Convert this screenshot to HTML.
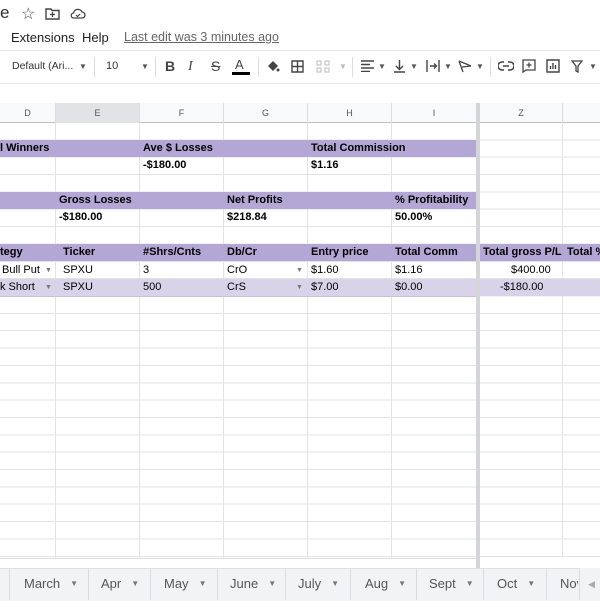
<!DOCTYPE html><html><head><style>
body{margin:0;width:600px;height:600px;overflow:hidden;background:#fff;font-family:"Liberation Sans",Arial,sans-serif;position:relative}
.a{position:absolute}
.t{position:absolute;font-size:11px;color:#000;white-space:nowrap;line-height:17px}
.b{font-weight:bold}
.ic{position:absolute;color:#444;font-size:14px}
.hd{position:absolute;top:103px;height:20px;font-size:9px;color:#555;text-align:center;line-height:20px;border-right:1px solid #dadce0}
.tab{position:absolute;top:576px;font-size:13px;color:#555;white-space:nowrap}
.tab i{font-style:normal;font-size:8px;color:#777;margin-left:10px;vertical-align:2px}
.sep{position:absolute;top:568px;height:32px;width:1px;background:#dadce0}
</style></head><body>
<div class="t" style="left:0;top:4px;font-size:17px;color:#333">e</div>
<div class="ic" style="left:21px;top:4px;font-size:16px">☆</div>
<svg class="a" style="left:45px;top:7px" width="15" height="13"><path d="M1 2h5l1 1.5h7v8.5H1z" fill="none" stroke="#444" stroke-width="1.4"/><path d="M7.5 5v5M5 7.5h5" stroke="#444" stroke-width="1.3"/></svg>
<svg class="a" style="left:70px;top:8px" width="16" height="11"><path d="M4 10h8a3 3 0 0 0 0-6 4.5 4.5 0 0 0-8.5 1A2.5 2.5 0 0 0 4 10z" fill="none" stroke="#444" stroke-width="1.3"/><path d="M6 7l1.5 1.5L10 6" fill="none" stroke="#444" stroke-width="1.2"/></svg>
<div class="t" style="left:11px;top:29px;font-size:13px;color:#222">Extensions</div>
<div class="t" style="left:82px;top:29px;font-size:13px;color:#222">Help</div>
<div class="t" style="left:124px;top:29px;font-size:12.5px;color:#666;text-decoration:underline">Last edit was 3 minutes ago</div>
<div class="a" style="left:0;top:50px;width:600px;height:1px;background:#e8eaed"></div>
<div class="a" style="left:0;top:83px;width:600px;height:1px;background:#e8eaed"></div>
<div class="t" style="left:12px;top:58px;font-size:10.5px;color:#333">Default (Ari...</div>
<div class="t" style="left:79px;top:58px;font-size:8px;color:#555">▼</div>
<div class="a" style="left:94px;top:57px;width:1px;height:20px;background:#dadce0"></div>
<div class="t" style="left:106px;top:58px;font-size:11px;color:#333">10</div>
<div class="t" style="left:141px;top:58px;font-size:8px;color:#555">▼</div>
<div class="a" style="left:155px;top:57px;width:1px;height:20px;background:#dadce0"></div>
<div class="t b" style="left:165px;top:58px;font-size:14px;color:#444">B</div>
<div class="t" style="left:188px;top:58px;font-size:14px;color:#444;font-style:italic;font-family:'Liberation Serif'">I</div>
<div class="t" style="left:211px;top:58px;font-size:14px;color:#444;text-decoration:line-through">S</div>
<div class="t" style="left:235px;top:56px;font-size:13px;color:#444">A</div>
<div class="a" style="left:232px;top:72px;width:18px;height:3px;background:#000"></div>
<div class="a" style="left:258px;top:57px;width:1px;height:20px;background:#dadce0"></div>
<svg class="a" style="left:266px;top:59px" width="14" height="14"><path d="M2 7l5-5 5 5-5 5z" fill="#444"/><circle cx="12" cy="11" r="1.5" fill="#444"/></svg>
<svg class="a" style="left:291px;top:60px" width="13" height="13"><path d="M1 1h11v11H1zM6.5 1v11M1 6.5h11" fill="none" stroke="#444" stroke-width="1.4"/></svg>
<svg class="a" style="left:316px;top:60px" width="14" height="13"><path d="M1 1h4v4H1zM9 1h4v4H9zM1 8h4v4H1zM9 8h4v4H9z" fill="none" stroke="#bbb" stroke-width="1"/></svg>
<div class="t" style="left:339px;top:58px;font-size:8px;color:#bbb">▼</div>
<div class="a" style="left:352px;top:57px;width:1px;height:20px;background:#dadce0"></div>
<svg class="a" style="left:361px;top:60px" width="13" height="12"><path d="M0 1h13M0 4.5h9M0 8h13M0 11.5h9" stroke="#444" stroke-width="1.4"/></svg>
<div class="t" style="left:378px;top:58px;font-size:8px;color:#555">▼</div>
<svg class="a" style="left:393px;top:59px" width="13" height="14"><path d="M6.5 1v9M3 7l3.5 3.5L10 7M1 13h11" fill="none" stroke="#444" stroke-width="1.4"/></svg>
<div class="t" style="left:410px;top:58px;font-size:8px;color:#555">▼</div>
<svg class="a" style="left:426px;top:59px" width="14" height="14"><path d="M1 1v12M13 1v12M4 7h6M8 4.5 10.5 7 8 9.5" fill="none" stroke="#444" stroke-width="1.4"/></svg>
<div class="t" style="left:444px;top:58px;font-size:8px;color:#555">▼</div>
<svg class="a" style="left:458px;top:59px" width="15" height="14"><path d="M1 2l12 5M1 2l4 11M4 8l9-1" fill="none" stroke="#444" stroke-width="1.3"/></svg>
<div class="t" style="left:476px;top:58px;font-size:8px;color:#555">▼</div>
<div class="a" style="left:490px;top:57px;width:1px;height:20px;background:#dadce0"></div>
<svg class="a" style="left:498px;top:61px" width="16" height="10"><path d="M6 1H4a4 4 0 0 0 0 8h2M10 1h2a4 4 0 0 1 0 8h-2M5 5h6" fill="none" stroke="#444" stroke-width="1.5"/></svg>
<svg class="a" style="left:522px;top:59px" width="14" height="14"><path d="M1 1h12v10H4l-3 2z" fill="none" stroke="#444" stroke-width="1.3"/><path d="M7 3.5v5M4.5 6h5" stroke="#444" stroke-width="1.3"/></svg>
<svg class="a" style="left:546px;top:59px" width="14" height="14"><path d="M1 1h12v12H1z" fill="none" stroke="#444" stroke-width="1.4"/><path d="M4.5 10V7M7 10V4M9.5 10V6" stroke="#444" stroke-width="1.4"/></svg>
<svg class="a" style="left:571px;top:60px" width="12" height="13"><path d="M1 1h10L7 6v6L5 11V6z" fill="none" stroke="#444" stroke-width="1.3"/></svg>
<div class="t" style="left:589px;top:58px;font-size:8px;color:#555">▼</div>
<div class="a" style="left:0;top:103px;width:600px;height:20px;background:#f8f9fa;border-bottom:1px solid #c0c0c0;box-sizing:border-box"></div>
<div class="a" style="left:56px;top:103px;width:84px;height:20px;background:#e1e3e6"></div>
<div class="hd" style="left:0;width:55px">D</div>
<div class="hd" style="left:56px;width:83px">E</div>
<div class="hd" style="left:140px;width:83px">F</div>
<div class="hd" style="left:224px;width:83px">G</div>
<div class="hd" style="left:308px;width:83px">H</div>
<div class="hd" style="left:392px;width:84px">I</div>
<div class="hd" style="left:480px;width:82px">Z</div>
<div class="a" style="left:0;top:123px;width:600px;height:435px;background:
repeating-linear-gradient(to bottom,transparent 0,transparent 16.35px,#e2e3e3 16.35px,#e2e3e3 17.35px),
linear-gradient(to right,transparent 55px,#e2e3e3 55px,#e2e3e3 56px,transparent 56px,transparent 139px,#e2e3e3 139px,#e2e3e3 140px,transparent 140px,transparent 223px,#e2e3e3 223px,#e2e3e3 224px,transparent 224px,transparent 307px,#e2e3e3 307px,#e2e3e3 308px,transparent 308px,transparent 391px,#e2e3e3 391px,#e2e3e3 392px,transparent 392px,transparent 562px,#e2e3e3 562px,#e2e3e3 563px,transparent 563px)"></div>
<div class="a" style="left:0;top:558px;width:476px;height:10px;background:#fff;border-top:1px solid #ddd"></div>
<div class="a" style="left:0;top:140px;width:476px;height:17px;background:#b4a7d6"></div>
<div class="a" style="left:0;top:192px;width:476px;height:17px;background:#b4a7d6"></div>
<div class="a" style="left:0;top:244px;width:476px;height:17px;background:#b4a7d6"></div>
<div class="a" style="left:480px;top:244px;width:120px;height:17px;background:#b4a7d6"></div>
<div class="a" style="left:0;top:279px;width:476px;height:17px;background:#d9d2e9"></div>
<div class="a" style="left:480px;top:279px;width:120px;height:17px;background:#d9d2e9"></div>
<div class="a" style="left:0;top:296px;width:476px;height:1px;background:#c8c0dc"></div>
<div class="a" style="left:476px;top:103px;width:4px;height:465px;background:#d3d5d8"></div>
<div class="t b" style="left:0;top:140px">l Winners</div>
<div class="t b" style="left:143px;top:140px">Ave $ Losses</div>
<div class="t b" style="left:311px;top:140px">Total Commission</div>
<div class="t b" style="left:143px;top:157px">-$180.00</div>
<div class="t b" style="left:311px;top:157px">$1.16</div>
<div class="t b" style="left:59px;top:192px">Gross Losses</div>
<div class="t b" style="left:227px;top:192px">Net Profits</div>
<div class="t b" style="left:395px;top:192px">% Profitability</div>
<div class="t b" style="left:59px;top:209px">-$180.00</div>
<div class="t b" style="left:227px;top:209px">$218.84</div>
<div class="t b" style="left:395px;top:209px">50.00%</div>
<div class="t b" style="left:0;top:244px">tegy</div>
<div class="t b" style="left:63px;top:244px">Ticker</div>
<div class="t b" style="left:143px;top:244px">#Shrs/Cnts</div>
<div class="t b" style="left:227px;top:244px">Db/Cr</div>
<div class="t b" style="left:311px;top:244px">Entry price</div>
<div class="t b" style="left:395px;top:244px">Total Comm</div>
<div class="t b" style="left:483px;top:244px">Total gross P/L</div>
<div class="t b" style="left:567px;top:244px">Total %</div>
<div class="t" style="left:2px;top:262px">Bull Put</div>
<div class="t" style="left:45px;top:262px;font-size:7px;color:#777">▼</div>
<div class="t" style="left:63px;top:262px">SPXU</div>
<div class="t" style="left:143px;top:262px">3</div>
<div class="t" style="left:227px;top:262px">CrO</div>
<div class="t" style="left:296px;top:262px;font-size:7px;color:#777">▼</div>
<div class="t" style="left:311px;top:262px">$1.60</div>
<div class="t" style="left:395px;top:262px">$1.16</div>
<div class="t" style="left:511px;top:262px">$400.00</div>
<div class="t" style="left:0;top:279px">k Short</div>
<div class="t" style="left:45px;top:279px;font-size:7px;color:#777">▼</div>
<div class="t" style="left:63px;top:279px">SPXU</div>
<div class="t" style="left:143px;top:279px">500</div>
<div class="t" style="left:227px;top:279px">CrS</div>
<div class="t" style="left:296px;top:279px;font-size:7px;color:#777">▼</div>
<div class="t" style="left:311px;top:279px">$7.00</div>
<div class="t" style="left:395px;top:279px">$0.00</div>
<div class="t" style="left:500px;top:279px">-$180.00</div>
<div class="a" style="left:0;top:568px;width:600px;height:32px;background:#f1f3f4;border-top:1px solid #e0e0e0"></div>
<div class="sep" style="left:9px"></div>
<div class="sep" style="left:88px"></div>
<div class="sep" style="left:150px"></div>
<div class="sep" style="left:217px"></div>
<div class="sep" style="left:285px"></div>
<div class="sep" style="left:350px"></div>
<div class="sep" style="left:416px"></div>
<div class="sep" style="left:483px"></div>
<div class="sep" style="left:546px"></div>
<div class="tab" style="left:24px">March<i>▼</i></div>
<div class="tab" style="left:101px">Apr<i>▼</i></div>
<div class="tab" style="left:164px">May<i>▼</i></div>
<div class="tab" style="left:230px">June<i>▼</i></div>
<div class="tab" style="left:298px">July<i>▼</i></div>
<div class="tab" style="left:365px">Aug<i>▼</i></div>
<div class="tab" style="left:429px">Sept<i>▼</i></div>
<div class="tab" style="left:497px">Oct<i>▼</i></div>
<div class="tab" style="left:560px;width:18px;overflow:hidden">Nov</div>
<div class="a" style="left:579px;top:568px;width:21px;height:32px;background:#f1f3f4;border-left:1px solid #ddd"></div>
<div class="t" style="left:588px;top:576px;font-size:9px;color:#aaa">◀</div>
</body></html>
